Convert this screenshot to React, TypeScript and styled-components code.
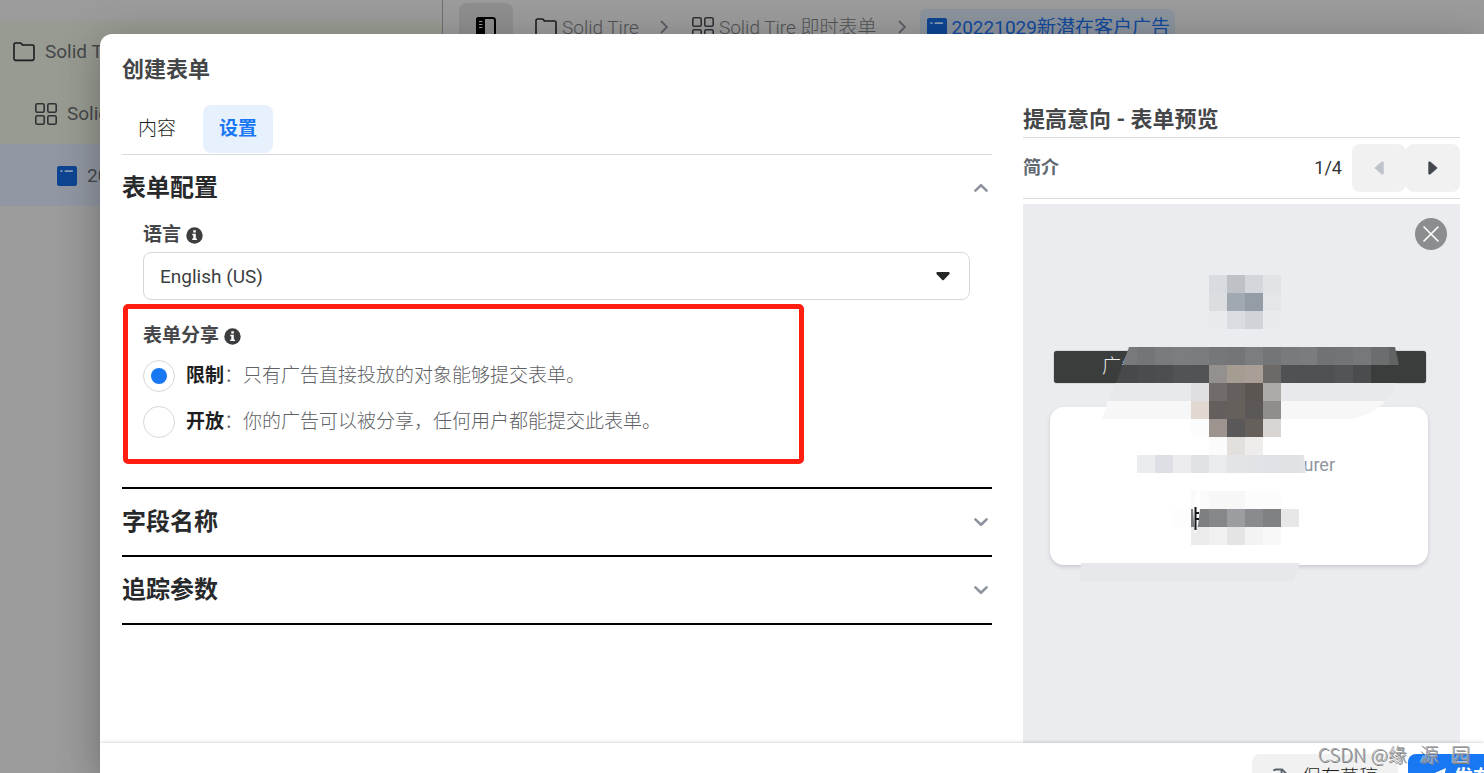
import React, { useState } from "react";
import styled, { createGlobalStyle, css } from "styled-components";

const sans = `Roboto, "Noto Sans CJK SC", sans-serif`;

const GlobalStyle = createGlobalStyle`
  *, *::before, *::after { box-sizing: border-box; }
  html, body { margin: 0; padding: 0; }
  body { font-family: ${sans}; font-size: 19px; line-height: 28px; color: #1c1e21; }
  button, select, input { font: inherit; color: inherit; margin: 0; }
  h1, h2, h3, p { margin: 0; }
`;

/* ---------- icons ---------- */

const Icon = styled.svg`
  display: block;
  flex: none;
`;

const FolderIcon = () => (
  <Icon width="22" height="20" viewBox="0 0 22 20" fill="none" stroke="#1a1c1e" strokeWidth="1.6" strokeLinejoin="round">
    <path d="M1 2.6Q1 1 2.6 1H7.2Q8 1 8.5 1.7L9.4 3H19.4Q21 3 21 4.6V16.8Q21 18.4 19.4 18.4H2.6Q1 18.4 1 16.8Z" />
  </Icon>
);

const GridIcon = () => (
  <Icon width="22" height="22" viewBox="0 0 22 22" fill="none" stroke="#303336" strokeWidth="1.6">
    <rect x="0.8" y="0.8" width="8.4" height="8.4" rx="1.4" />
    <rect x="12.8" y="0.8" width="8.4" height="8.4" rx="1.4" />
    <rect x="0.8" y="12.8" width="8.4" height="8.4" rx="1.4" />
    <rect x="12.8" y="12.8" width="8.4" height="8.4" rx="1.4" />
  </Icon>
);

const FormIcon = () => (
  <Icon width="20" height="20" viewBox="0 0 20 20">
    <rect width="20" height="20" rx="2" fill="#0e4592" />
    <rect x="3.4" y="4.2" width="2" height="1.8" fill="#8a9cb8" />
    <rect x="7.6" y="4.2" width="8.4" height="1.8" rx="0.6" fill="#8a9cb8" />
  </Icon>
);

const PanelIcon = () => (
  <Icon width="20" height="20" viewBox="0 0 20 20">
    <rect x="1" y="1" width="18" height="18" rx="2.4" fill="none" stroke="#000" strokeWidth="2" />
    <path d="M3 0H9V20H3Q0 20 0 17V3Q0 0 3 0Z" fill="#000" />
    <path d="M3 4.5H6.4M3 7.5H6.4M3 10.5H6.4" stroke="#999" strokeWidth="1.2" />
  </Icon>
);

const CrumbArrow = () => (
  <Icon width="8" height="14" viewBox="0 0 8 14" fill="none" stroke="#5c6066" strokeWidth="1.8">
    <path d="M1 1L7 7L1 13" />
  </Icon>
);

const Chevron = ({ up }: { up?: boolean }) => (
  <Icon width="16" height="10" viewBox="0 0 16 10" fill="none" stroke="#8d949e" strokeWidth="2.6" strokeLinecap="round" strokeLinejoin="round">
    <path d={up ? "M2.4 7.6L8 2.2L13.6 7.6" : "M2.4 2.4L8 7.8L13.6 2.4"} />
  </Icon>
);

const InfoIcon = () => (
  <Icon width="17" height="17" viewBox="0 0 17 17">
    <circle cx="8.5" cy="8.5" r="8.2" fill="#3c3d3f" />
    <path d="M7.3 3.2H9.8V5.4H7.3ZM6.3 6.8H9.8V11.6H10.9V13H6.2V11.6H7.3V8.2H6.3Z" fill="#fff" />
  </Icon>
);

const Triangle = ({ left, color }: { left?: boolean; color: string }) => (
  <Icon width="10" height="14" viewBox="0 0 10 14" fill={color} stroke={color} strokeWidth="1.4" strokeLinejoin="round">
    <path d={left ? "M9 1.2V12.8H8L1.4 7L8 1.2Z" : "M1 1.2V12.8H2L8.6 7L2 1.2Z"} />
  </Icon>
);

const DraftIcon = () => (
  <Icon width="18" height="20" viewBox="0 0 18 20" fill="none" stroke="#5a6270" strokeWidth="2">
    <path d="M2 3Q2 1.4 4 1.4H10L15.6 7V18.6H2V12" />
    <path d="M9.6 1.4V7.4H15.6" />
  </Icon>
);

const SendIcon = () => (
  <Icon width="18" height="20" viewBox="0 0 18 20" fill="#fff">
    <path d="M18 0L0 8L5 11L14 4L7.6 12.6L14 18Z" />
  </Icon>
);

/* ---------- page behind the dialog ---------- */

const Page = styled.div`
  position: relative;
  display: flex;
  min-height: 100vh;
  overflow: hidden;
  background: #9b9b9b;
`;

const Sidebar = styled.nav`
  flex: 0 0 443px;
  padding-top: 20px;
  border-right: 1px solid #6d6f71;
`;

const SideItem = styled.a<{ $depth: number; $active?: boolean }>`
  display: flex;
  align-items: center;
  gap: 10px;
  height: 62px;
  padding-top: 1px;
  padding-left: ${(p) => 13 + p.$depth * 22}px;
  background: ${(p) => (p.$active ? "#9197a2" : "#989b91")};
  color: #45484b;
  text-decoration: none;
  white-space: nowrap;
`;

const TopBar = styled.header`
  flex: 1;
  display: flex;
  align-items: center;
  height: 48px;
  margin-top: 3px;
  padding-left: 16px;
  white-space: nowrap;
`;

const PanelButton = styled.button`
  display: grid;
  place-items: center;
  width: 54px;
  height: 48px;
  margin-right: 16px;
  border: 0;
  border-radius: 8px;
  background: #8e8e8e;
`;

const Crumbs = styled.div`
  display: flex;
  align-items: center;
  gap: 18px;
`;

const Crumb = styled.a<{ $current?: boolean }>`
  display: flex;
  align-items: center;
  gap: 5px;
  height: 36px;
  padding: ${(p) => (p.$current ? "0 5px 0 7px" : "2px 3px 0 6px")};
  border-radius: 6px;
  color: #505356;
  font-weight: 300;
  text-decoration: none;
  ${(p) =>
    p.$current &&
    css`
      margin-left: -4px;
      padding-top: 2px;
      background: #8b939d;
      color: #10499b;
      font-weight: 400;
    `}
`;

/* ---------- dialog ---------- */

const Dialog = styled.section`
  position: absolute;
  inset: 34px 0 0 100px;
  display: flex;
  flex-direction: column;
  border-radius: 12px 0 0 0;
  background: #fff;
  box-shadow: 0 10px 40px rgba(0, 0, 0, 0.3);
  overflow: hidden;
`;

const Body = styled.div`
  flex: 1;
  min-height: 0;
  display: grid;
  grid-template-columns: minmax(0, 1fr) 437px;
  gap: 31px;
  padding: 22px 24px 0 22px;
`;

const Column = styled.div`
  display: flex;
  flex-direction: column;
  min-width: 0;
`;

const Title = styled.h1`
  font-size: 22px;
  line-height: 28px;
  font-weight: 700;
  color: #444648;
`;

const PreviewTitle = styled(Title).attrs({ as: "h2" })`
  margin-top: 50px;
  padding-bottom: 3px;
`;

const Tabs = styled.div`
  display: flex;
  gap: 11px;
  margin-top: 21px;
  padding-bottom: 1px;
  border-bottom: 1px solid #d8dadd;
`;

const Tab = styled.button<{ $active?: boolean }>`
  width: 70px;
  height: 48px;
  padding: 0;
  border: 0;
  border-radius: 8px;
  background: ${(p) => (p.$active ? "#e7f1fe" : "transparent")};
  color: ${(p) => (p.$active ? "#1877f2" : "#1c1e21")};
  font-weight: ${(p) => (p.$active ? 700 : 300)};
`;

const Section = styled.section`
  border-bottom: 2px solid #000;
`;

const SectionHeader = styled.button`
  display: flex;
  align-items: center;
  justify-content: space-between;
  width: 100%;
  height: 66px;
  padding: 0 3px 1px 0;
  border: 0;
  background: none;
  font-size: 24px;
  font-weight: 700;
  color: #28292b;
`;

const Field = styled.div`
  margin: 0 22px 0 21px;
`;

const Label = styled.label`
  display: flex;
  align-items: center;
  gap: 5px;
  color: #444648;
  font-weight: 700;
`;

const Legend = styled(Label).attrs({ as: "div" })``;

const SelectBox = styled.div`
  position: relative;
  margin-top: 3px;
`;

const Select = styled.select`
  display: block;
  appearance: none;
  width: 100%;
  height: 48px;
  padding: 1px 16px 0;
  border: 1px solid #d8d8da;
  border-radius: 8px;
  background: #fff;
  color: #3c3e41;
`;

const Caret = styled(Icon)`
  position: absolute;
  top: 20px;
  right: 20px;
  pointer-events: none;
`;

const ShareBox = styled.div`
  max-width: 681px;
  margin: 4px 0 23px 1px;
  padding: 13px 15px 21px;
  border: 5px solid #ff1e10;
  border-radius: 5px;
`;

const Options = styled.div`
  display: flex;
  flex-direction: column;
  gap: 14px;
  margin-top: 10px;
`;

const Option = styled.label`
  display: flex;
  align-items: center;
  gap: 11px;
  height: 32px;
  color: #5e6165;
  font-weight: 300;

  strong {
    color: #1c1e21;
    font-weight: 700;
  }
`;

const Radio = styled.input`
  appearance: none;
  flex: none;
  display: grid;
  place-items: center;
  width: 32px;
  height: 32px;
  border: 1px solid #d8d8da;
  border-radius: 50%;
  background: #fff;

  &:checked::before {
    content: "";
    width: 16px;
    height: 16px;
    border-radius: 50%;
    background: #1877f2;
  }
`;

/* ---------- preview ---------- */

const Pager = styled.div`
  display: flex;
  align-items: center;
  height: 62px;
  border: solid #d8dadd;
  border-width: 1px 0;
`;

const StepName = styled.h3`
  flex: 1;
  font-size: 18px;
  font-weight: 700;
  color: #606770;
`;

const StepCount = styled.span`
  margin-right: 10px;
  font-size: 18px;
  color: #303235;
`;

const PagerButton = styled.button`
  display: grid;
  place-items: center;
  width: 54px;
  height: 48px;
  padding: 0;
  border: 0;
  border-radius: 8px;
  background: #f1f1f1;
`;

const Preview = styled.div`
  position: relative;
  flex: 1;
  display: flex;
  flex-direction: column;
  margin-top: 5px;
  padding: 14px 32px 0 27px;
  background: #ebecf0;
`;

const CloseButton = styled.button`
  align-self: flex-end;
  display: grid;
  place-items: center;
  width: 32px;
  height: 32px;
  margin-right: -19px;
  padding: 0;
  border: 0;
  border-radius: 50%;
  background: #8c8d8f;
`;

const Banner = styled.p`
  height: 32px;
  margin: 101px 2px 0 4px;
  padding: 2px 0 0 48px;
  border-radius: 3px;
  background: #3b3d3c;
  box-shadow: 0 0 1px #3b3d3c;
  color: #e9eaec;
  font-weight: 300;
`;

const PreviewCard = styled.div`
  height: 158px;
  margin-top: 24px;
  padding: 44px 93px 0 0;
  border-radius: 14px;
  background: #fff;
  box-shadow: 0 2px 4px rgba(0, 0, 0, 0.15);
  color: #90959e;
  font-size: 18px;
  text-align: right;
`;

const Mosaic = styled.svg`
  position: absolute;
  top: 0;
  left: 0;
  pointer-events: none;
`;

const CELL = 18;

/* [row, first column, colours from left to right] */
type Row = [number, number, string[]];

const mosaicRows: Row[] = [
  [0, 10, ["#d8dce0", "#bec1c6", "#d3d6da", "#e0e4e7"]],
  [1, 10, ["#dcdde1", "#a0a8b1", "#949ca5", "#e5e6ea"]],
  [2, 10, ["#e9eaed", "#d9dce1", "#d0d4d8", "#e9eaee"]],
  [6, 9, ["#dfdee0", "#716c69", "#65605d", "#5c5653", "#aeaaa8"]],
  [7, 9, ["#e1d8d1", "#645f5c", "#66605d", "#5c5857", "#918d8a"]],
  [8, 9, ["#fcfcfc", "#9e948f", "#5a5858", "#66605d", "#d9d5d3"]],
  [9, 10, ["#fbfbfb", "#e3dfdc", "#eeedeb"]],
  [10, 6, ["#ebecee", "#dedfe4", "#ebebed", "#e1e2e6", "#eaebed", "#e2e4e7", "#e1e3e7", "#dfe1e6", "#e1e2e4"]],
  [12, 9, ["#fafafa", "#f7f7f7", "#f7f7f7", "#fcfcfc", "#fcfcfc"]],
  [13, 8, ["#fdfdfd", "#7e7f81", "#868789", "#9c9da0", "#8a8b8e", "#808183", "#e7e7e7"]],
  [14, 9, ["#ebebeb", "#f0f0f0", "#e4e4e4", "#f3f3f3", "#f8f8f8"]],
];

const bandRows: Row[] = [
  [4, 5, ["#797a7c", "#747577", "#7a7b7d", "#7c7d7f", "#7b7c7e", "#767779", "#747577", "#7c7d7f", "#747577", "#797a7c", "#7b7c7e", "#717274", "#737476", "#777879", "#6c6d6f", "#626365"]],
  [5, 4, ["#48494b", "#48494b", "#4b4c4e", "#4d4e50", "#525355", "#525355", "#93908e", "#a59d92", "#a99f97", "#6b6a69", "#505153", "#4f5052", "#4f5052", "#535456", "#4b4c4e"]],
];

const Cells = ({ rows }: { rows: Row[] }) => (
  <g shapeRendering="crispEdges">
    {rows.flatMap(([row, col, colors]) =>
      colors.map((fill, i) => (
        <rect key={`${row}-${i}`} x={6 + (col + i) * CELL} y={71 + row * CELL} width={CELL} height={CELL} fill={fill} />
      ))
    )}
  </g>
);

const MosaicOverlay = () => (
  <Mosaic width="437" height="400" viewBox="0 0 437 400" aria-hidden="true">
    <clipPath id="band">
      <path d="M106 143H372L376 161V179H93Z" />
    </clipPath>
    <path d="M92 179H373Q370 189 363 197H85Z" fill="#e8e9ed" />
    <path d="M85 197H363Q348 212 328 215H79Z" fill="#f7f7f7" />
    <g clipPath="url(#band)">
      <Cells rows={bandRows} />
    </g>
    <Cells rows={mosaicRows} />
    <path d="M276 251H281L283 269H276Z" fill="#e2e4e6" />
    <path d="M58 359H277L271 377H56Z" fill="#e7e8ec" />
    <path d="M174 287H177V305L175 321L172 331L170 305Z" fill="#fff" />
    <path d="M172.5 303V326M173 309H176M173 315H176" stroke="#15171a" strokeWidth="2" />
  </Mosaic>
);

/* ---------- footer ---------- */

const Footer = styled.footer`
  flex: none;
  display: flex;
  justify-content: flex-end;
  align-items: flex-start;
  gap: 10px;
  height: 30px;
  padding-top: 11px;
  background: #fff;
  box-shadow: 0 -1px 3px rgba(0, 0, 0, 0.15);
  z-index: 1;
`;

const FooterButton = styled.button<{ $primary?: boolean }>`
  display: flex;
  align-items: center;
  gap: ${(p) => (p.$primary ? 8 : 12)}px;
  flex: 0 0 ${(p) => (p.$primary ? 76 : 146)}px;
  height: 48px;
  padding: 0 0 0 20px;
  border: 0;
  border-radius: ${(p) => (p.$primary ? "8px 0 0 8px" : "8px")};
  background: ${(p) => (p.$primary ? "#1877f2" : "#f1f1f1")};
  color: ${(p) => (p.$primary ? "#fff" : "#1c1e21")};
  font-weight: ${(p) => (p.$primary ? 700 : 300)};
  white-space: nowrap;
  overflow: hidden;
`;

const Watermark = styled.div`
  position: absolute;
  right: 14px;
  bottom: 5px;
  z-index: 2;
  font-family: "Noto Sans CJK SC", sans-serif;
  font-size: 19px;
  font-weight: 300;
  color: #a3a4a6;
  text-shadow: 1px 1px 0 #7c7d7f, -1px -1px 0 rgba(255, 255, 255, 0.6);
  white-space: pre;
`;

export default function App() {
  const [share, setShare] = useState("limited");

  return (
    <>
      <GlobalStyle />
      <Page>
        <Sidebar>
          <SideItem href="#folder" $depth={0}>
            <FolderIcon />
            Solid Tire
          </SideItem>
          <SideItem href="#forms" $depth={1}>
            <GridIcon />
            Solid Tire
          </SideItem>
          <SideItem href="#ad" $depth={2} $active>
            <FormIcon />
            20221029
          </SideItem>
        </Sidebar>
        <TopBar>
          <PanelButton aria-label="Toggle panel">
            <PanelIcon />
          </PanelButton>
          <Crumbs>
            <Crumb href="#folder">
              <FolderIcon />
              Solid Tire
            </Crumb>
            <CrumbArrow />
            <Crumb href="#forms">
              <GridIcon />
              Solid Tire 即时表单
            </Crumb>
            <CrumbArrow />
            <Crumb href="#ad" $current>
              <FormIcon />
              20221029新潜在客户广告
            </Crumb>
          </Crumbs>
        </TopBar>

        <Dialog role="dialog" aria-labelledby="dialog-title">
          <Body>
            <Column>
              <Title id="dialog-title">创建表单</Title>
              <Tabs role="tablist">
                <Tab role="tab" aria-selected={false}>内容</Tab>
                <Tab role="tab" aria-selected $active>设置</Tab>
              </Tabs>

              <Section>
                <SectionHeader aria-expanded>
                  表单配置
                  <Chevron up />
                </SectionHeader>
                <Field>
                  <Label htmlFor="language">
                    语言
                    <InfoIcon />
                  </Label>
                  <SelectBox>
                    <Select id="language" defaultValue="en">
                      <option value="en">English (US)</option>
                    </Select>
                    <Caret width="14" height="9" viewBox="0 0 14 9" fill="#242628">
                      <path d="M1.2 0H12.8Q14.4 0.8 13.2 2.2L8 7.8Q7 8.8 6 7.8L0.8 2.2Q-0.4 0.8 1.2 0Z" />
                    </Caret>
                  </SelectBox>
                </Field>
                <ShareBox role="radiogroup" aria-labelledby="share-label">
                  <Legend id="share-label">
                    表单分享
                    <InfoIcon />
                  </Legend>
                  <Options>
                    <Option>
                      <Radio type="radio" name="share" checked={share === "limited"} onChange={() => setShare("limited")} />
                      <span><strong>限制</strong>：只有广告直接投放的对象能够提交表单。</span>
                    </Option>
                    <Option>
                      <Radio type="radio" name="share" checked={share === "open"} onChange={() => setShare("open")} />
                      <span><strong>开放</strong>：你的广告可以被分享，任何用户都能提交此表单。</span>
                    </Option>
                  </Options>
                </ShareBox>
              </Section>
              <Section>
                <SectionHeader aria-expanded={false}>
                  字段名称
                  <Chevron />
                </SectionHeader>
              </Section>
              <Section>
                <SectionHeader aria-expanded={false}>
                  追踪参数
                  <Chevron />
                </SectionHeader>
              </Section>
            </Column>

            <Column>
              <PreviewTitle>提高意向 - 表单预览</PreviewTitle>
              <Pager>
                <StepName>简介</StepName>
                <StepCount>1/4</StepCount>
                <PagerButton aria-label="Previous" disabled>
                  <Triangle left color="#bec3c9" />
                </PagerButton>
                <PagerButton aria-label="Next">
                  <Triangle color="#444950" />
                </PagerButton>
              </Pager>
              <Preview>
                <CloseButton aria-label="Close">
                  <Icon width="16" height="16" viewBox="0 0 16 16" stroke="#fff" strokeWidth="1.6" strokeLinecap="round">
                    <path d="M1 1L15 15M15 1L1 15" />
                  </Icon>
                </CloseButton>
                <Banner>广告</Banner>
                <PreviewCard>urer</PreviewCard>
                <MosaicOverlay />
              </Preview>
            </Column>
          </Body>
          <Footer>
            <FooterButton>
              <DraftIcon />
              保存草稿
            </FooterButton>
            <FooterButton $primary>
              <SendIcon />
              发布
            </FooterButton>
          </Footer>
        </Dialog>
        <Watermark>CSDN @缘   源   园</Watermark>
      </Page>
    </>
  );
}
